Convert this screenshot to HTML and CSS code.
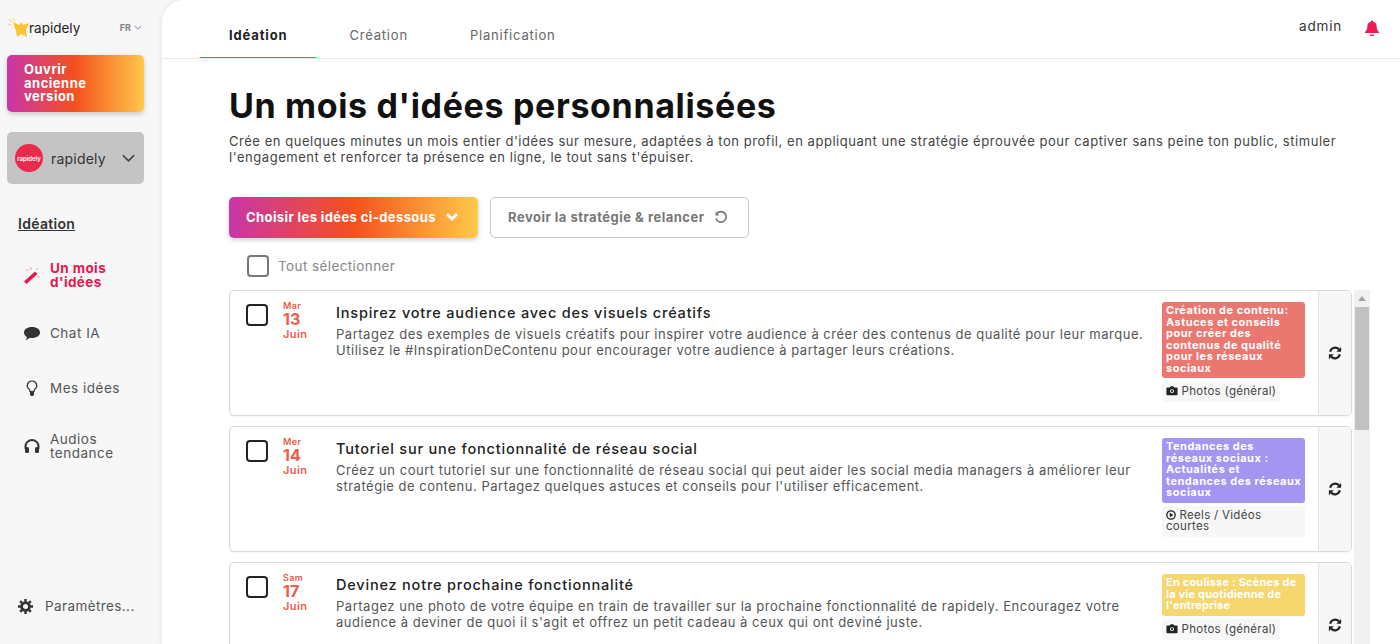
FILE: index.html
```html
<!DOCTYPE html>
<html lang="fr">
<head>
    <meta charset="utf-8">
    <title>Rapidely - Un mois d'idées</title>
    <link rel="stylesheet" href="styles.css">
</head>
<body>
    <aside class="sidebar">
        <div class="brand">
            <div class="logo">
                <svg class="logo-mark" viewBox="0 0 22 22" width="22" height="22">
                    <path d="M1 2l3 3M5 1l2 3M0 7l3 1" stroke="#fbd25a" stroke-width="1" fill="none"/>
                    <path d="M5 5l6 3 2-3 2 3 6-2-3 7 1 7-6-3-4 3-1-6z" fill="#fbc531"/>
                </svg>
                <span class="logo-text">rapidely</span>
            </div>
            <div class="lang">FR
                <svg viewBox="0 0 10 6" width="8" height="5"><path d="M1 1l4 4 4-4" fill="none" stroke="#9a9fa6" stroke-width="1.3"/></svg>
            </div>
        </div>
        <a class="old-version">Ouvrir ancienne version</a>
        <div class="account">
            <span class="avatar">rapidely</span>
            <span class="account-name">rapidely</span>
            <svg viewBox="0 0 14 8" width="13" height="8"><path d="M1 1l6 6 6-6" fill="none" stroke="#3c3c3c" stroke-width="1.7"/></svg>
        </div>
        <div class="nav-title">Idéation</div>
        <nav class="nav">
            <a class="nav-item active">
                <svg viewBox="0 0 18 18" width="18" height="18"><path d="M1 15.5L12 5.500l2.500 2.500L3.500 18z" fill="#e8174f"/><path d="M3 4h3M8 1v3M15 2l-2 2M14 11h3" stroke="#e8a0b4" stroke-width="1"/></svg>
                <span>Un mois d'idées</span>
            </a>
            <a class="nav-item">
                <svg viewBox="0 0 18 16" width="18" height="16"><path d="M9 2c4.500 0 8 2.300 8 5.500S13.500 13 9 13c-.8 0-1.500 0-2.200-.2C5.500 14 4 15 2.500 15c1-1 1.500-2 1.500-3C2 11 1 9.400 1 7.500 1 4.300 4.500 2 9 2z" fill="#333"/></svg>
                <span>Chat IA</span>
            </a>
            <a class="nav-item">
                <svg viewBox="0 0 18 16" width="18" height="16"><path d="M9 1a4.500 4.500 0 0 0-3 8c.8.700 1 1.500 1 2.500h4c0-1 .2-1.800 1-2.500a4.500 4.500 0 0 0-3-8z" fill="none" stroke="#333" stroke-width="1.200"/><path d="M7 12h4v2.500L10 16H8l-1-1.500z" fill="#333"/></svg>
                <span>Mes idées</span>
            </a>
            <a class="nav-item">
                <svg viewBox="0 0 18 16" width="18" height="16"><path d="M2.500 11V8.500a6.500 6.500 0 0 1 13 0V11" fill="none" stroke="#333" stroke-width="2"/><rect x="2" y="9" width="4" height="6" rx="1.500" fill="#333"/><rect x="12" y="9" width="4" height="6" rx="1.500" fill="#333"/></svg>
                <span>Audios tendance</span>
            </a>
        </nav>
        <a class="settings">
            <svg viewBox="0 0 16 16" width="15" height="15"><circle cx="8" cy="8" r="4.200" fill="none" stroke="#333" stroke-width="3"/><path d="M8 0v3M8 13v3M0 8h3M13 8h3M2.300 2.300l2.100 2.100M11.600 11.600l2.100 2.100M2.300 13.700l2.100-2.100M11.600 4.400l2.100-2.100" stroke="#333" stroke-width="2.600"/></svg>
            <span>Paramètres...</span>
        </a>
    </aside>

    <main class="main">
        <header class="topbar">
            <div class="tabs">
                <a class="tab current">Idéation</a>
                <a class="tab">Création</a>
                <a class="tab">Planification</a>
            </div>
            <div class="user">
                <span>admin</span>
                <svg viewBox="0 0 16 16" width="16" height="16"><path d="M8 .5c.7 0 1.200.5 1.200 1.200 2.400.6 3.500 2.600 3.500 5 0 2.500.8 3.700 2.300 5.300v1H1v-1c1.500-1.600 2.300-2.800 2.300-5.300 0-2.400 1.100-4.400 3.500-5C6.800 1 7.300.5 8 .5z" fill="#ee1c52"/><path d="M6 14.500h4a2 2 0 0 1-4 0z" fill="#ee1c52"/></svg>
            </div>
        </header>

        <section class="content">
            <h1>Un mois d'idées personnalisées</h1>
            <p class="intro">Crée en quelques minutes un mois entier d'idées sur mesure, adaptées à ton profil, en appliquant une stratégie éprouvée pour captiver sans peine ton public, stimuler l'engagement et renforcer ta présence en ligne, le tout sans t'épuiser.</p>

            <div class="actions">
                <a class="btn-main">Choisir les idées ci-dessous
                    <svg viewBox="0 0 14 10" width="14" height="10"><path d="M2 2l5 5 5-5" fill="none" stroke="#fff" stroke-width="3"/></svg>
                </a>
                <a class="btn-outline">Revoir la stratégie &amp; relancer
                    <svg viewBox="0 0 14 14" width="14" height="14"><path d="M3 3.500A5.200 5.200 0 1 1 2 8.500" fill="none" stroke="#777" stroke-width="1.700"/><path d="M1.500 1.500v4h4z" fill="#777"/></svg>
                </a>
            </div>

            <label class="select-all"><span class="check light"></span>Tout sélectionner</label>

            <div class="list-wrap">
                <div class="list">
                    <article class="card">
                        <span class="check"></span>
                        <div class="date"><small>Mar</small><b>13</b><em>Juin</em></div>
                        <div class="idea">
                            <h2>Inspirez votre audience avec des visuels créatifs</h2>
                            <p>Partagez des exemples de visuels créatifs pour inspirer votre audience à créer des contenus de qualité pour leur marque. Utilisez le #InspirationDeContenu pour encourager votre audience à partager leurs créations.</p>
                        </div>
                        <div class="tags">
                            <div class="tag red">Création de contenu: Astuces et conseils pour créer des contenus de qualité pour les réseaux sociaux</div>
                            <div class="format short">
                                <svg viewBox="0 0 14 12" width="12" height="11"><path d="M1.500 2.500h3L5.500 1h3l1 1.500h3a1 1 0 0 1 1 1v7a1 1 0 0 1-1 1h-11a1 1 0 0 1-1-1v-7a1 1 0 0 1 1-1z" fill="#222"/><circle cx="7" cy="6.700" r="2.300" fill="#fff"/><circle cx="7" cy="6.700" r="1.300" fill="#222"/></svg>
                                Photos (général)
                            </div>
                        </div>
                        <div class="refresh">
                            <svg viewBox="0 0 16 16" width="14" height="14"><path d="M2.500 6.500A5.700 5.700 0 0 1 12.500 4" fill="none" stroke="#222" stroke-width="2.400"/><path d="M15 1v5.500H9.500z" fill="#222"/><path d="M13.500 9.500A5.700 5.700 0 0 1 3.500 12" fill="none" stroke="#222" stroke-width="2.400"/><path d="M1 15V9.500h5.500z" fill="#222"/></svg>
                        </div>
                    </article>

                    <article class="card">
                        <span class="check"></span>
                        <div class="date"><small>Mer</small><b>14</b><em>Juin</em></div>
                        <div class="idea">
                            <h2>Tutoriel sur une fonctionnalité de réseau social</h2>
                            <p>Créez un court tutoriel sur une fonctionnalité de réseau social qui peut aider les social media managers à améliorer leur stratégie de contenu. Partagez quelques astuces et conseils pour l'utiliser efficacement.</p>
                        </div>
                        <div class="tags">
                            <div class="tag purple">Tendances des réseaux sociaux : Actualités et tendances des réseaux sociaux</div>
                            <div class="format">
                                <svg viewBox="0 0 12 12" width="10" height="10"><circle cx="6" cy="6" r="5" fill="none" stroke="#222" stroke-width="1.600"/><path d="M4.500 3.300L9 6l-4.500 2.700z" fill="#222"/></svg>
                                Reels / Vidéos courtes
                            </div>
                        </div>
                        <div class="refresh">
                            <svg viewBox="0 0 16 16" width="14" height="14"><path d="M2.500 6.500A5.700 5.700 0 0 1 12.500 4" fill="none" stroke="#222" stroke-width="2.400"/><path d="M15 1v5.500H9.500z" fill="#222"/><path d="M13.500 9.500A5.700 5.700 0 0 1 3.500 12" fill="none" stroke="#222" stroke-width="2.400"/><path d="M1 15V9.500h5.500z" fill="#222"/></svg>
                        </div>
                    </article>

                    <article class="card">
                        <span class="check"></span>
                        <div class="date"><small>Sam</small><b>17</b><em>Juin</em></div>
                        <div class="idea">
                            <h2>Devinez notre prochaine fonctionnalité</h2>
                            <p>Partagez une photo de votre équipe en train de travailler sur la prochaine fonctionnalité de rapidely. Encouragez votre audience à deviner de quoi il s'agit et offrez un petit cadeau à ceux qui ont deviné juste.</p>
                        </div>
                        <div class="tags">
                            <div class="tag yellow">En coulisse : Scènes de la vie quotidienne de l'entreprise</div>
                            <div class="format short">
                                <svg viewBox="0 0 14 12" width="12" height="11"><path d="M1.500 2.500h3L5.500 1h3l1 1.500h3a1 1 0 0 1 1 1v7a1 1 0 0 1-1 1h-11a1 1 0 0 1-1-1v-7a1 1 0 0 1 1-1z" fill="#222"/><circle cx="7" cy="6.700" r="2.300" fill="#fff"/><circle cx="7" cy="6.700" r="1.300" fill="#222"/></svg>
                                Photos (général)
                            </div>
                        </div>
                        <div class="refresh">
                            <svg viewBox="0 0 16 16" width="14" height="14"><path d="M2.500 6.500A5.700 5.700 0 0 1 12.500 4" fill="none" stroke="#222" stroke-width="2.400"/><path d="M15 1v5.500H9.500z" fill="#222"/><path d="M13.500 9.500A5.700 5.700 0 0 1 3.500 12" fill="none" stroke="#222" stroke-width="2.400"/><path d="M1 15V9.500h5.500z" fill="#222"/></svg>
                        </div>
                    </article>
                </div>
                <div class="scrollbar">
                    <span class="arrow"></span>
                    <span class="thumb"></span>
                </div>
            </div>
        </section>
    </main>
</body>
</html>
```

FILE: styles.css
```css
html, body { height: 100%; margin: 0; overflow: hidden; }
body { display: flex; background: #f7f7f7; font-family: "Inter", "Liberation Sans", sans-serif; color: #333; }
a { display: block; }

.sidebar { width: 162px; flex-shrink: 0; height: 644px; display: flex; flex-direction: column; padding-left: 7px; box-sizing: border-box; }
.brand { display: flex; justify-content: space-between; align-items: center; height: 55px; padding: 0 20px 0 1px; box-sizing: border-box; }
.logo { display: flex; align-items: center; }
.logo-text { font-size: 13.5px; color: #222; margin-left: -1px; }
.lang { font-size: 9px; font-weight: 700; color: #7d8288; display: flex; align-items: center; gap: 3px; }

.old-version { width: 137px; height: 57px; box-sizing: border-box; padding: 8px 30px 0 17px; border-radius: 5px; background: linear-gradient(90deg, #c936a8 0%, #f4511e 50%, #ffc94a 100%); box-shadow: 0 2px 5px rgba(0,0,0,.2); color: #fff; font-weight: 700; font-size: 13px; line-height: 13.5px; letter-spacing: .5px; }
.account { width: 137px; height: 52px; margin-top: 20px; background: #c4c4c4; border-radius: 5px; display: flex; align-items: center; padding: 0 9px 0 8px; box-sizing: border-box; }
.avatar { width: 28px; height: 28px; border-radius: 50%; background: #ea2a4d; color: #fff; font-size: 6px; font-weight: 600; display: flex; align-items: center; justify-content: center; overflow: hidden; flex-shrink: 0; }
.account-name { flex: 1; font-size: 14px; color: #333; margin-left: 8px; letter-spacing: .2px; }

.nav-title { margin: 31px 0 0 11px; font-size: 14px; font-weight: 600; text-decoration: underline; color: #333; letter-spacing: .3px; }
.nav { margin-top: 29px; display: flex; flex-direction: column; }
.nav-item { display: flex; align-items: center; gap: 9px; width: 130px; min-height: 55px; padding-left: 16px; box-sizing: border-box; font-size: 13.5px; line-height: 14px; color: #555; letter-spacing: .5px; }
.nav-item span { width: 80px; }
.nav-item.active { color: #e8174f; font-weight: 700; height: 28px; min-height: 28px; margin-bottom: 16px; letter-spacing: .4px; }
.nav-item:last-child { margin-top: 3px; }
.settings { margin: auto 0 30px 11px; display: flex; align-items: center; gap: 12px; font-size: 13.5px; color: #555; letter-spacing: .4px; }

.main { flex: 1; height: 644px; background: #fff; border-top-left-radius: 22px; box-shadow: -1px 0 4px rgba(0,0,0,.07); display: flex; flex-direction: column; overflow: hidden; }
.topbar { height: 59px; flex-shrink: 0; box-sizing: border-box; border-bottom: 1px solid #e9e9e9; display: flex; justify-content: space-between; padding: 0 20px 0 38px; }
.tabs { display: flex; gap: 4px; }
.tab { height: 58px; box-sizing: border-box; padding: 27px 29px 0; font-size: 13px; color: #666; letter-spacing: .8px; }
.tab.current { color: #222; font-weight: 700; border-bottom: 1px solid #ee4a5f; letter-spacing: .85px; }
.user { display: flex; gap: 22px; align-items: flex-start; padding-top: 18px; font-size: 13.5px; color: #333; letter-spacing: .8px; }
.user svg { margin-top: 2px; }

.content { padding: 26px 0 0 67px; flex: 1; min-height: 0; display: flex; flex-direction: column; }
h1 { margin: 0; font-size: 34px; line-height: 42px; font-weight: 700; color: #111; letter-spacing: .65px; }
.intro { margin: 6px 0 0; width: 1115px; font-size: 13px; line-height: 16px; color: #444; letter-spacing: .54px; }

.actions { display: flex; gap: 12px; margin-top: 32px; }
.btn-main, .btn-outline { height: 41px; border-radius: 5px; box-sizing: border-box; display: flex; align-items: center; padding-bottom: 2px; font-size: 13px; font-weight: 700; letter-spacing: .4px; }
.btn-main { width: 249px; padding-left: 17px; gap: 9px; color: #fff; background: linear-gradient(90deg, #c936a8 0%, #f4511e 50%, #ffc94a 100%); box-shadow: 0 2px 5px rgba(0,0,0,.2); }
.btn-outline { width: 259px; padding-left: 17px; gap: 9px; color: #777; border: 1px solid #c9c9c9; letter-spacing: .5px; }

.select-all { display: flex; align-items: center; gap: 9px; margin: 17px 0 0 18px; font-size: 13.5px; color: #888; height: 22px; letter-spacing: .4px; }
.check { width: 22px; height: 22px; box-sizing: border-box; border: 2px solid #222; border-radius: 4px; flex-shrink: 0; }
.check.light { border-color: #777; }

.list-wrap { display: flex; gap: 2px; margin-top: 13px; flex: 1; min-height: 0; }
.list { width: 1123px; display: flex; flex-direction: column; gap: 10px; }
.card { display: flex; height: 126px; flex-shrink: 0; box-sizing: border-box; border: 1px solid #d9d9d9; border-radius: 5px; padding-left: 16px; box-shadow: 0 1px 2px rgba(0,0,0,.05); overflow: hidden; }
.card > .check { margin-top: 13px; }
.date { width: 50px; margin-left: 3px; flex-shrink: 0; box-sizing: border-box; padding: 10px 0 0 12px; color: #ef5b4c; font-weight: 600; font-size: 11px; line-height: 12px; letter-spacing: .4px; }
.date small, .date b, .date em { display: block; font-style: normal; }
.date small { font-size: 9px; line-height: 10px; }
.date b { font-size: 16px; line-height: 16px; font-weight: 700; letter-spacing: 0; }
.date em { line-height: 14px; }
.idea { width: 814px; margin-left: 15px; padding-top: 13px; flex-shrink: 0; }
h2 { margin: 0; font-size: 14.5px; line-height: 18px; font-weight: 500; color: #222; letter-spacing: .8px; }
.idea p { margin: 4px 0 0; font-size: 13px; line-height: 16px; color: #555; letter-spacing: .52px; }

.tags { width: 143px; margin-left: 12px; padding-top: 11px; flex-shrink: 0; display: flex; flex-direction: column; gap: 3px; align-items: flex-start; }
.tag { width: 100%; box-sizing: border-box; padding: 3px 2px 4px 4px; border-radius: 3px; color: #fff; font-size: 11px; font-weight: 700; line-height: 11.5px; letter-spacing: .5px; }
.tag.red { background: #ea7870; }
.tag.purple { background: #a395f0; }
.tag.yellow { background: #f5d76e; letter-spacing: .2px; }
.format { box-sizing: border-box; width: 100%; background: #f7f7f7; border-radius: 3px; padding: 4px 4px 5px; font-size: 11.5px; line-height: 11px; color: #444; letter-spacing: .3px; }
.format.short { width: auto; }
.format svg { vertical-align: -1px; }

.refresh { width: 36px; margin-left: 13px; border-left: 1px solid #e6e6e6; background: #f7f7f7; display: flex; align-items: center; justify-content: center; }

.scrollbar { width: 16px; background: #f1f1f1; display: flex; flex-direction: column; align-items: center; }
.arrow { width: 0; height: 0; margin-top: 6px; border: 4px solid transparent; border-top: 0; border-bottom: 5px solid #a3a3a3; }
.thumb { width: 14px; height: 123px; margin-top: 6px; background: #c1c1c1; }
```
